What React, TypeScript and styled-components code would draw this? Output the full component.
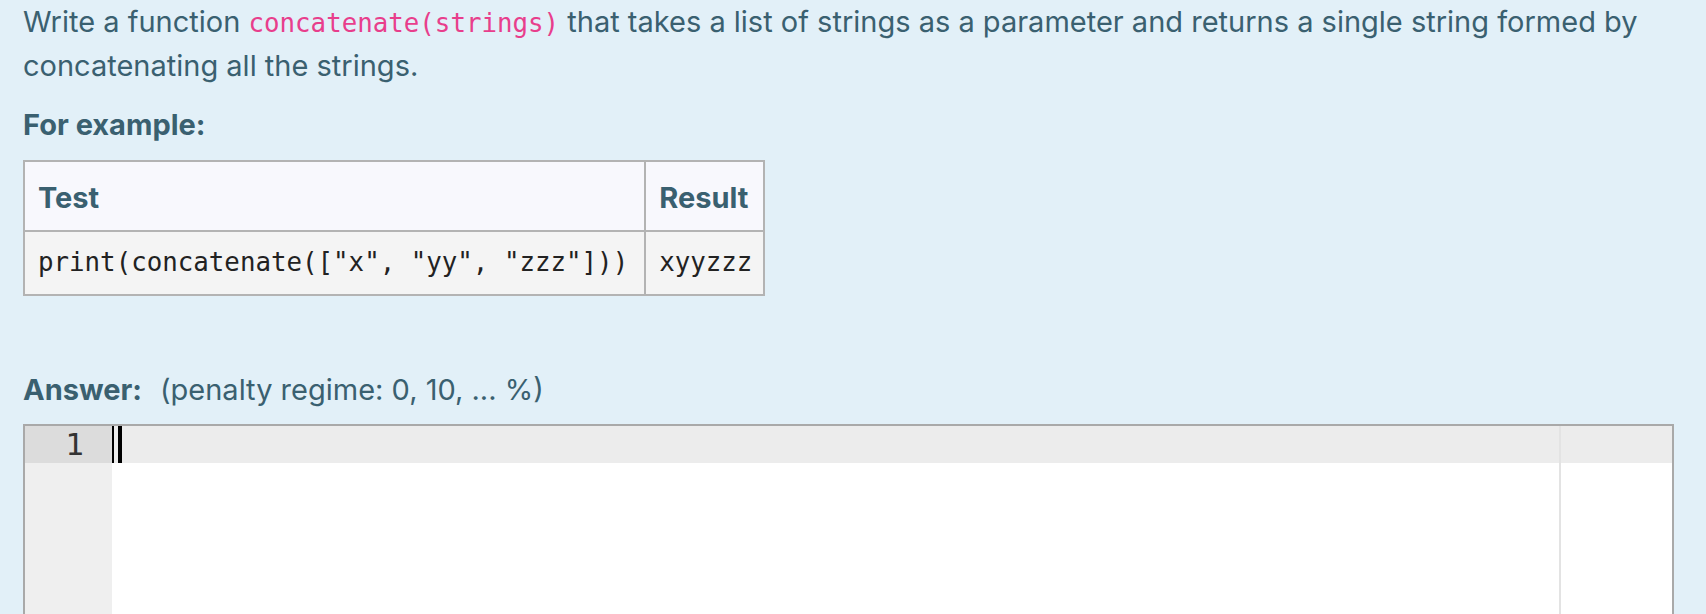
import React from "react";
import styled, { createGlobalStyle } from "styled-components";

const GlobalStyle = createGlobalStyle`
  html, body {
    margin: 0;
    padding: 0;
    background: #e2f0f8;
  }
  body {
    font-family: Inter, "Noto Sans", sans-serif;
    color: #3a6070;
  }
`;

const Formulation = styled.div`
  padding: 0 32px 40px 23px;
  min-height: 614px;
  box-sizing: border-box;
`;

const Prompt = styled.p`
  margin: 0;
  font-size: 29px;
  line-height: 44px;
  color: #3a6070;
`;

const InlineCode = styled.code`
  font-family: "DejaVu Sans Mono", "Liberation Mono", monospace;
  font-size: 25.8px;
  line-height: 1;
  color: #e83e8c;
`;

const Heading = styled.h4`
  margin: 14px 0 13px;
  font-size: 29px;
  line-height: 45px;
  font-weight: 700;
  color: #3a6070;
`;

const ExampleTable = styled.table`
  border-collapse: collapse;
  border: 2px solid #b3b3b3;
`;

const HeadCell = styled.th`
  background: #f8f8fd;
  border: 2px solid #b3b3b3;
  padding: 13px 16px 10px 13px;
  text-align: left;
  font-size: 29px;
  line-height: 45px;
  font-weight: 700;
  color: #3a6070;

  &:last-child {
    padding-right: 11px;
  }
`;

const BodyCell = styled.td`
  background: #f4f4f4;
  border: 2px solid #b3b3b3;
  padding: 11px 16px 12px 13px;
  font-family: "DejaVu Sans Mono", "Liberation Mono", monospace;
  font-size: 25.8px;
  line-height: 39px;
  color: #222;
  white-space: pre;

  &:last-child {
    padding-right: 11px;
  }
`;

const AnswerLine = styled.div`
  margin-top: 71px;
  display: flex;
  align-items: baseline;
  gap: 18px;
  font-size: 29px;
  line-height: 45px;
`;

const AnswerLabel = styled.span`
  font-weight: 700;
`;

const Penalty = styled.span`
  font-weight: 400;
`;

const Editor = styled.div`
  margin-top: 12px;
  height: 320px;
  border: 2px solid #a9a9a9;
  background: #fff;
  display: flex;
  position: relative;
`;

const Gutter = styled.div`
  width: 87px;
  flex: none;
  background: #efefef;
`;

const GutterCell = styled.div<{ $active?: boolean }>`
  height: 37px;
  background: ${(p) => (p.$active ? "#dcdcdc" : "transparent")};
  box-sizing: border-box;
  padding-right: 28px;
  text-align: right;
  font-family: "DejaVu Sans Mono", "Liberation Mono", monospace;
  font-size: 31px;
  line-height: 37px;
  color: #333;
`;

const Content = styled.div`
  flex: 1;
  position: relative;
`;

const ActiveLine = styled.div`
  height: 37px;
  background: #ececec;
`;

const PrintMargin = styled.div`
  position: absolute;
  top: 0;
  bottom: 0;
  left: 1447px;
  width: 2px;
  background: #e3e3e3;
`;

const Cursor = styled.div<{ $w: number; $x: number }>`
  position: absolute;
  top: 0;
  left: ${(p) => p.$x}px;
  width: ${(p) => p.$w}px;
  height: 37px;
  background: #000;
`;

export default function App() {
  return (
    <>
      <GlobalStyle />
      <Formulation>
        <Prompt>
          Write a function <InlineCode>concatenate(strings)</InlineCode> that
          takes a list of strings as a parameter and returns a single string
          formed by concatenating all the strings.
        </Prompt>
        <Heading>For example:</Heading>
        <ExampleTable>
          <thead>
            <tr>
              <HeadCell>Test</HeadCell>
              <HeadCell>Result</HeadCell>
            </tr>
          </thead>
          <tbody>
            <tr>
              <BodyCell>{'print(concatenate(["x", "yy", "zzz"]))'}</BodyCell>
              <BodyCell>xyyzzz</BodyCell>
            </tr>
          </tbody>
        </ExampleTable>
        <AnswerLine>
          <AnswerLabel>Answer:</AnswerLabel>
          <Penalty>(penalty regime: 0, 10, ... %)</Penalty>
        </AnswerLine>
        <Editor>
          <Gutter>
            <GutterCell $active>1</GutterCell>
          </Gutter>
          <Content>
            <ActiveLine />
            <PrintMargin />
            <Cursor $x={0} $w={2} />
            <Cursor $x={6} $w={4} />
          </Content>
        </Editor>
      </Formulation>
    </>
  );
}
